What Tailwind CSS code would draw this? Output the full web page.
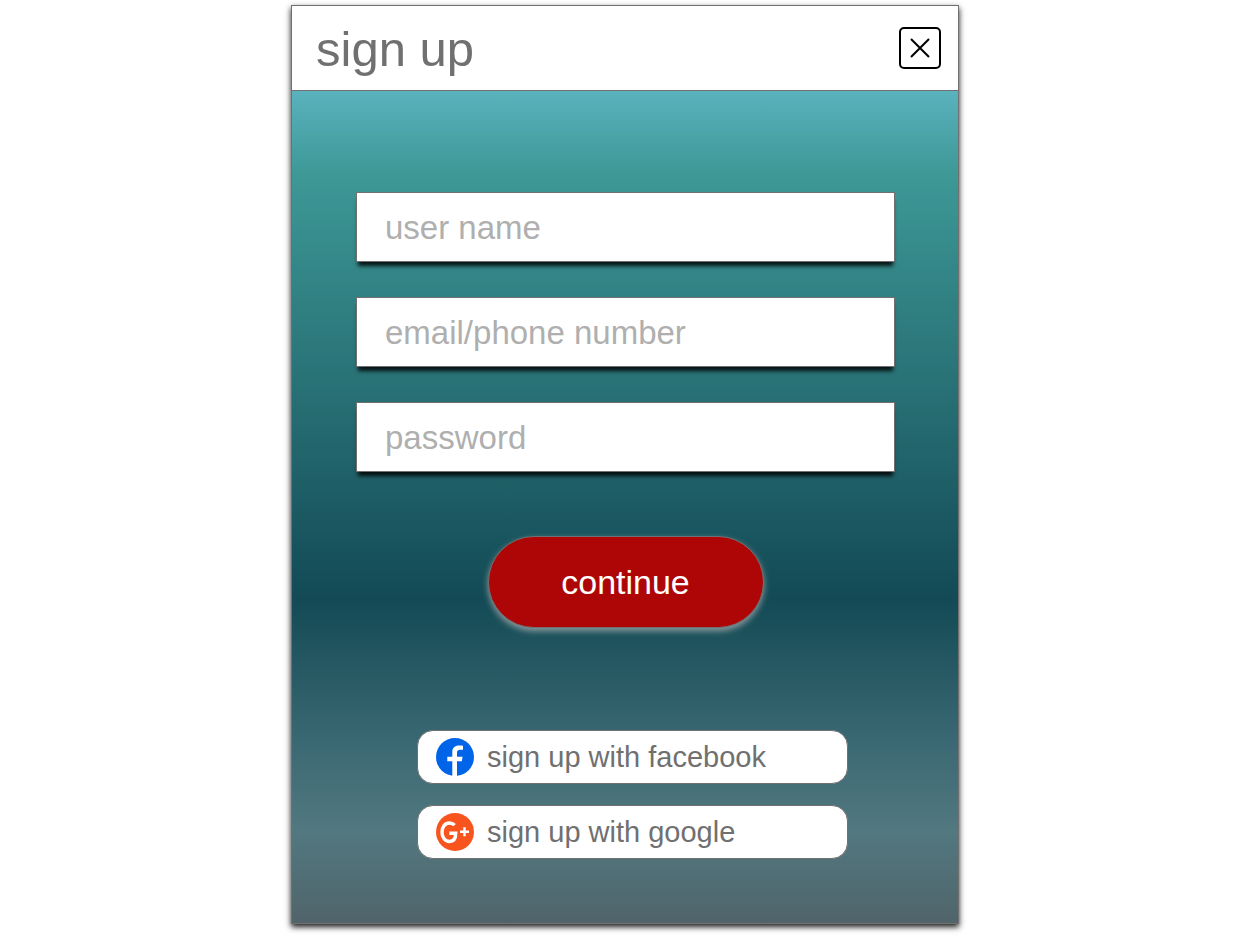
<!DOCTYPE html>
<html lang="en">
<head>
    <meta charset="UTF-8">
    <meta name="viewport" content="width=device-width, initial-scale=1.0">
    <title>Sign up</title>
    <script src="https://cdn.jsdelivr.net/npm/@tailwindcss/browser@4"></script>
</head>
<body class="bg-white pt-[5px] pb-3 font-['Liberation_Sans',Arial,sans-serif]">
    <main class="w-full max-w-[668px] mx-auto border border-[#707070] shadow-[0_3px_6px_rgba(0,0,0,0.9)]">
        <header class="flex items-center justify-between h-[85px] pl-6 pr-[17px] bg-white border-b border-[#707070]">
            <h1 class="text-[49px] leading-[56px] pt-[2px] text-[#707070]">sign up</h1>
            <button type="button" aria-label="Close" class="flex items-center justify-center size-[42px] bg-white border-2 border-black rounded-[5px]">
                <svg class="size-5" viewBox="0 0 20 20" fill="none" stroke="#000" stroke-width="2" aria-hidden="true">
                    <path d="M1 1 19 19M19 1 1 19"/>
                </svg>
            </button>
        </header>

        <form class="flex flex-col items-center pl-16 pr-[63px] pt-[101px] pb-16 bg-[linear-gradient(to_bottom,#5ab2bd_0%,#3d9896_10%,#134a55_61%,#3a6872_78%,#527880_89%,#50646a_100%)]">
            <div class="flex flex-col gap-[35px] w-full max-w-[539px]">
                <input type="text" aria-label="user name" placeholder="user name" class="w-full h-[70px] px-7 pt-[2px] bg-white border border-[#707070] text-[33px] text-[#707070] placeholder:text-[#afafaf] shadow-[0_6px_4px_-2px_rgba(0,0,0,0.85)]">
                <input type="text" aria-label="email/phone number" placeholder="email/phone number" class="w-full h-[70px] px-7 pt-[2px] bg-white border border-[#707070] text-[33px] text-[#707070] placeholder:text-[#afafaf] shadow-[0_6px_4px_-2px_rgba(0,0,0,0.85)]">
                <input type="password" aria-label="password" placeholder="password" class="w-full h-[70px] px-7 pt-[2px] bg-white border border-[#707070] text-[33px] text-[#707070] placeholder:text-[#afafaf] shadow-[0_6px_4px_-2px_rgba(0,0,0,0.85)]">
            </div>

            <button type="submit" class="mt-16 w-full max-w-[276px] h-[92px] rounded-full bg-[#ae0606] border border-[#707070] text-[34px] text-white shadow-[0_3px_6px_rgba(180,180,180,0.75)]">continue</button>

            <!-- Social sign up -->
            <div class="flex flex-col gap-[21px] w-full max-w-[445px] mt-[102px] pl-[14px]">
                <button type="button" class="flex items-center gap-[13px] w-full h-[54px] pl-[18px] bg-white border border-[#707070] rounded-2xl text-[29px] text-[#707070]">
                    <svg class="size-[38px]" viewBox="0 0 38 38" aria-hidden="true">
                        <circle cx="19" cy="19" r="19" fill="#0064e8"/>
                        <path fill="#fff" d="M16.300 38V23.200h-5v-4.400h5v-4.600c0-4.500 2.600-6.700 6.700-6.700 1.500 0 2.800.100 4 .300v3.900h-2.700c-2.500 0-3.300 1.200-3.300 3v4.100h5.600l-.800 4.400h-4.800V38z"/>
                    </svg>
                    <span class="pt-[2px]">sign up with facebook</span>
                </button>
                <button type="button" class="flex items-center gap-[13px] w-full h-[54px] pl-[18px] bg-white border border-[#707070] rounded-2xl text-[29px] text-[#707070]">
                    <svg class="size-[38px]" viewBox="0 0 38 38" fill="none" stroke="#fff" aria-hidden="true">
                        <circle cx="19" cy="19" r="19" fill="#f8541e" stroke="none"/>
                        <path stroke-width="3.400" d="M18.600 12.200C17.300 10.800 15.500 10 13.500 10 9 10 6 14 6 19.200S9 28.500 13.500 28.500c3.600 0 6.200-2.500 6.200-8.200H13.300"/>
                        <path stroke-width="2.400" d="M24 18.800h9M28.500 14.300v9"/>
                    </svg>
                    <span class="pt-[2px]">sign up with google</span>
                </button>
            </div>
        </form>
    </main>
</body>
</html>
